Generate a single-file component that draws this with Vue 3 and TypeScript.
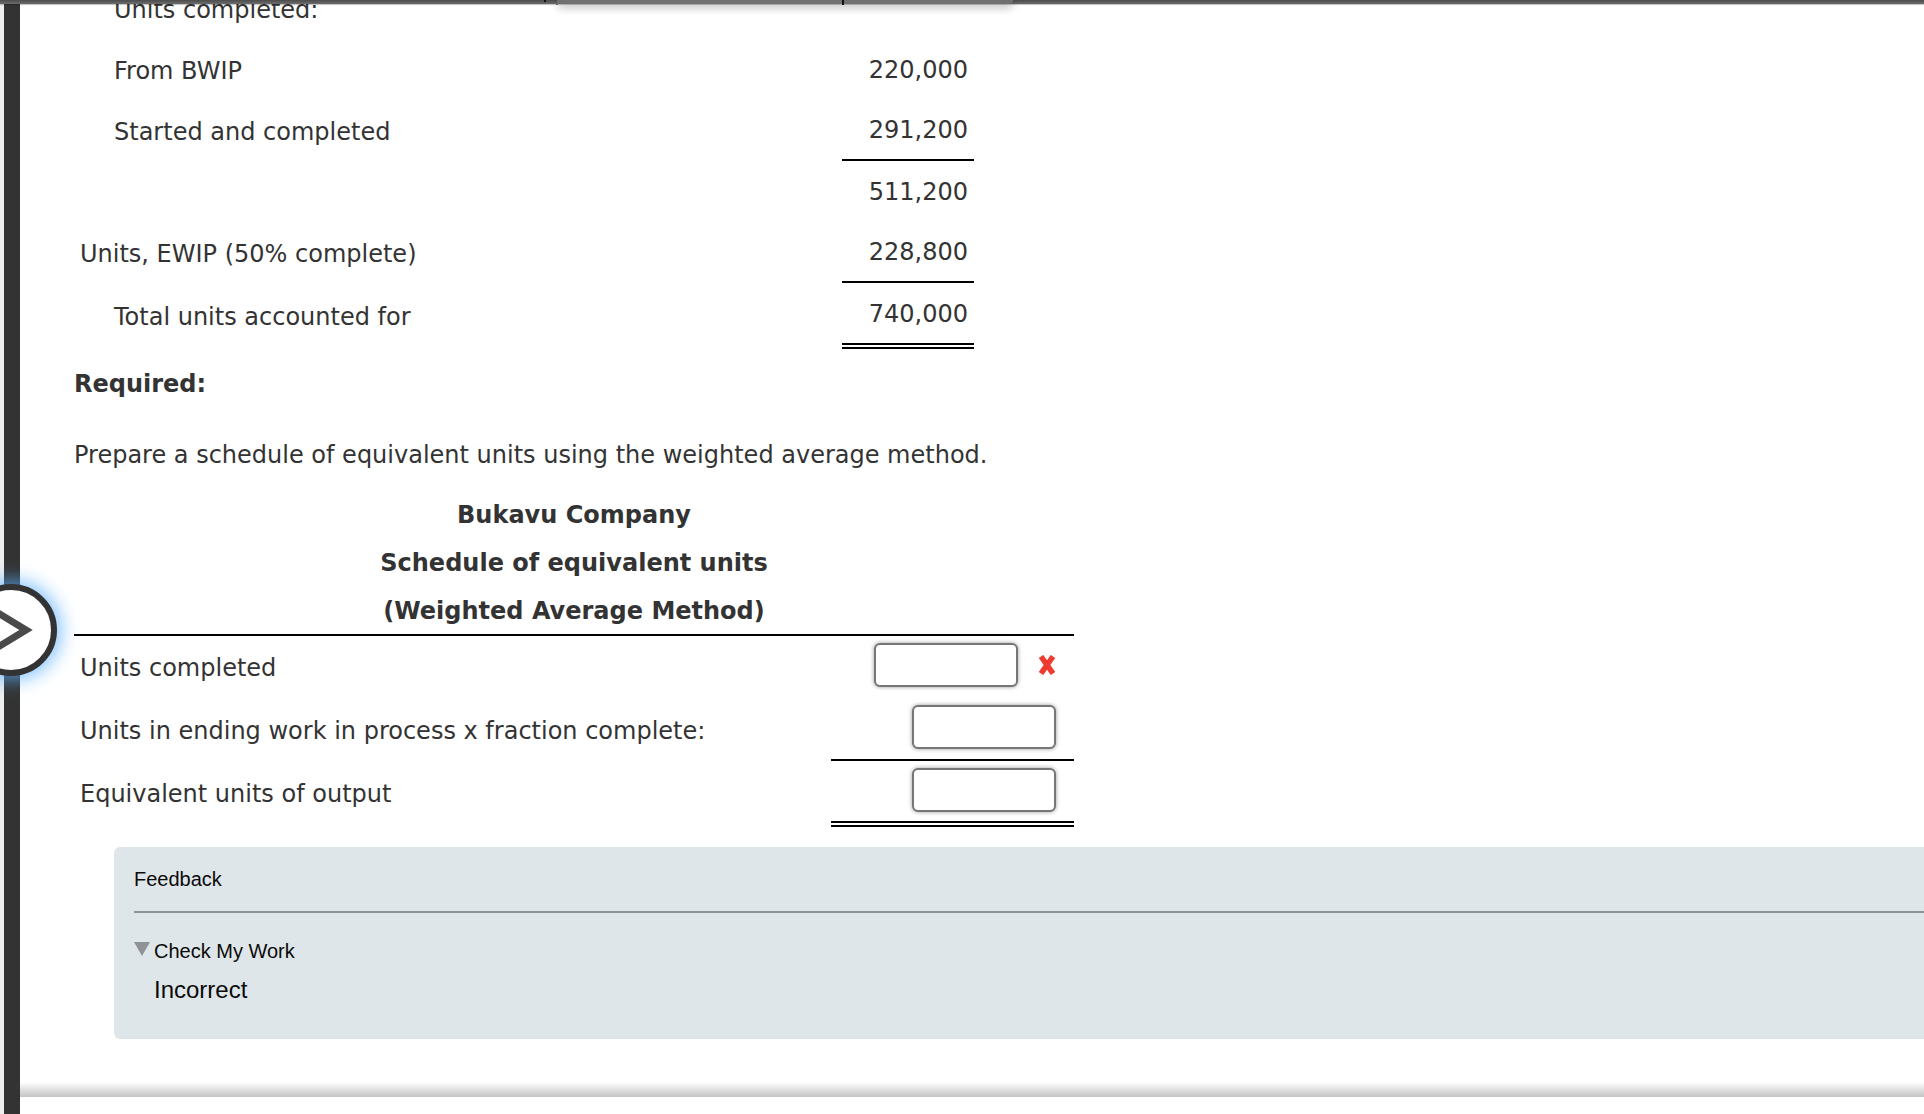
<script setup lang="ts">
// Source figures for the top schedule
const unitRows = [
  { label: 'Units completed:', value: '', indent: true, rule: '' },
  { label: 'From BWIP', value: '220,000', indent: true, rule: '' },
  { label: 'Started and completed', value: '291,200', indent: true, rule: 'single' },
  { label: '', value: '511,200', indent: true, rule: '' },
  { label: 'Units, EWIP (50% complete)', value: '228,800', indent: false, rule: 'single' },
  { label: 'Total units accounted for', value: '740,000', indent: true, rule: 'double' },
];

const answerRows = [
  { label: 'Units completed', rule: '', wrong: true },
  { label: 'Units in ending work in process x fraction complete:', rule: 'single', wrong: false },
  { label: 'Equivalent units of output', rule: 'double', wrong: false },
];

const title = ['Bukavu Company', 'Schedule of equivalent units', '(Weighted Average Method)'];
</script>

<template>
  <div class="page">
    <div class="top-bar"></div>
    <div class="body-row">
      <div class="rail"></div>
      <div class="sheet">
        <main class="scroller">
          <div class="content">
            <div v-for="row in unitRows" :key="row.value + row.label" class="unit-row">
              <div class="unit-label" :class="{ indent: row.indent }">{{ row.label }}</div>
              <div class="unit-value" :class="row.rule">{{ row.value }}</div>
            </div>

            <p class="required">Required:</p>
            <p class="prompt">Prepare a schedule of equivalent units using the weighted average method.</p>

            <div class="title">
              <div v-for="line in title" :key="line">{{ line }}</div>
            </div>

            <div class="answers">
              <div v-for="row in answerRows" :key="row.label" class="answer-row">
                <div class="answer-label" :class="row.rule">{{ row.label }}</div>
                <div class="answer-cell" :class="row.rule">
                  <input class="answer-input" type="text" />
                  <svg v-if="row.wrong" class="wrong" viewBox="0 0 18 20" width="18" height="20">
                    <path d="M3 1.5 L15 18.5 M15 1.5 L3 18.5" stroke="#ee3b2d" stroke-width="5.5" fill="none" />
                  </svg>
                </div>
              </div>
            </div>

            <section class="feedback">
              <div class="feedback-head">Feedback</div>
              <div class="check-line">
                <span class="triangle"></span>
                <span>Check My Work</span>
              </div>
              <div class="result">Incorrect</div>
            </section>
          </div>
        </main>
        <div class="bottom-strip"></div>
      </div>
    </div>

    <!-- dropdown edge hanging from the top toolbar -->
    <div class="popup-edge"></div>
    <i class="tick tick-a"></i>
    <i class="tick tick-b"></i>
    <i class="tick tick-c"></i>

    <button class="nav-btn" type="button" aria-label="Next">
      <svg viewBox="0 0 40 44" width="40" height="44">
        <path d="M-8 5 L20 22 L-8 39" fill="none" stroke="#4a4a4a" stroke-width="7" />
      </svg>
    </button>
  </div>
</template>

<style scoped>
.page {
  position: relative;
  height: 1114px;
  overflow: hidden;
  background: #fff;
  font-family: 'DejaVu Sans', Verdana, sans-serif;
  font-size: 24px;
  color: #333;
}

.top-bar {
  height: 4px;
  background: linear-gradient(#4c4c4c, #6c6c6c);
  box-shadow: 0 1px 1px rgba(0, 0, 0, 0.25);
  position: relative;
  z-index: 2;
}

.body-row {
  display: flex;
  height: 1110px;
  padding-left: 4px;
  background: #eee;
}

.rail {
  width: 16px;
  background: #333;
  flex: none;
}

.sheet {
  flex: 1;
  min-width: 0;
  display: flex;
  flex-direction: column;
  background: #fff;
}

.scroller {
  height: 1093px;
  overflow: hidden;
  position: relative;
}

.scroller::after {
  content: '';
  position: absolute;
  left: 0;
  right: 0;
  bottom: 0;
  height: 15px;
  background: linear-gradient(rgba(198, 198, 198, 0), #dedede 55%, #c4c4c4);
}

.bottom-strip {
  flex: 1;
}

.content {
  margin-top: -26px;
}

.unit-row {
  display: flex;
  align-items: stretch;
  padding-left: 60px;
}

.unit-label {
  box-sizing: border-box;
  width: 762px;
  padding-top: 2px;
  display: flex;
  align-items: center;
  white-space: nowrap;
}

.unit-label.indent {
  padding-left: 34px;
}

.unit-value {
  box-sizing: border-box;
  width: 132px;
  height: 61px;
  line-height: 63px;
  padding-right: 6px;
  text-align: right;
}

.unit-value.single {
  line-height: 61px;
  border-bottom: 2px solid #000;
}

.unit-value.double {
  height: 66px;
  line-height: 62px;
  border-bottom: 6px double #000;
}

.required {
  margin: 20px 0 0 54px;
  line-height: 30px;
  font-weight: 700;
}

.prompt {
  margin: 41px 0 0 54px;
  line-height: 30px;
}

.title {
  margin: 21px 0 -1px 54px;
  width: 1000px;
  text-align: center;
  font-weight: 700;
  line-height: 48px;
}

.answers {
  margin-left: 54px;
  width: 1000px;
  border-top: 2px solid #000;
}

.answer-row {
  display: flex;
  align-items: stretch;
}

.answer-label {
  flex: 1;
  padding: 2px 0 0 6px;
  display: flex;
  align-items: center;
  white-space: nowrap;
}

.answer-label.double {
  padding-top: 0;
}

.answer-cell {
  box-sizing: border-box;
  width: 243px;
  height: 62px;
  padding: 0 18px 3px 0;
  display: flex;
  justify-content: flex-end;
  align-items: center;
  gap: 20px;
}

.answer-row:first-child .answer-cell {
  padding-bottom: 5px;
}

.answer-cell.single {
  height: 63px;
  border-bottom: 2px solid #000;
}

.answer-cell.double {
  height: 66px;
  border-bottom: 6px double #000;
}

.answer-input {
  box-sizing: border-box;
  width: 144px;
  height: 44px;
  padding: 0;
  background: #fff;
  border: 2px solid #767676;
  border-radius: 6px;
  box-shadow: 0 0 4px rgba(0, 0, 0, 0.4);
  outline: none;
}

.wrong {
  flex: none;
}

.feedback {
  box-sizing: border-box;
  margin: 20px 0 0 94px;
  height: 192px;
  padding: 20px 0 0 20px;
  background: #dfe6e9;
  border-radius: 6px 0 0 6px;
  font-family: 'Liberation Sans', Arial, sans-serif;
  font-size: 20px;
  color: #0a0a0a;
}

.feedback-head {
  line-height: 24px;
  padding-bottom: 20px;
  border-bottom: 2px solid #8f9396;
}

.check-line {
  margin-top: 26px;
  line-height: 24px;
  display: flex;
}

.triangle {
  width: 0;
  height: 0;
  margin: 3px 4px 0 0;
  border-left: 8px solid transparent;
  border-right: 8px solid transparent;
  border-top: 14px solid #8f9396;
}

.result {
  margin-top: 13px;
  padding-left: 20px;
  font-size: 24px;
  line-height: 28px;
}

.popup-edge {
  position: absolute;
  left: 557px;
  top: 0;
  width: 456px;
  height: 4px;
  background: #707070;
  border-radius: 0 0 6px 6px;
  box-shadow: 0 3px 8px rgba(0, 0, 0, 0.4);
  z-index: 3;
}

.tick {
  position: absolute;
  top: 0;
  width: 2px;
  height: 5px;
  background: #111;
  z-index: 4;
}

.tick-a {
  left: 544px;
  height: 2px;
}

.tick-b {
  left: 556px;
  top: 2px;
  height: 3px;
  background: #666;
}

.tick-c {
  left: 842px;
}

.nav-btn {
  position: absolute;
  left: -35px;
  top: 584px;
  box-sizing: border-box;
  width: 92px;
  height: 92px;
  padding: 0 0 0 35px;
  display: flex;
  align-items: center;
  background: #fff;
  border: 6px solid #333;
  border-radius: 50%;
  box-shadow: 0 0 18px 4px rgba(90, 175, 255, 0.75);
  z-index: 5;
}

.nav-btn svg {
  overflow: visible;
  flex: none;
  filter: blur(0.5px);
}
</style>

<style>
body {
  overflow: hidden;
}
</style>
